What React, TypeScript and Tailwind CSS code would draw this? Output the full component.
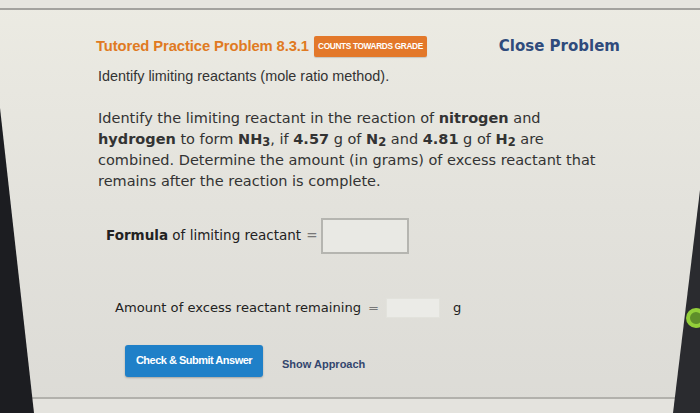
export default function App() {
  const verdana = 'font-["DejaVu_Sans",Verdana,sans-serif]';
  const arial = 'font-["Liberation_Sans",Arial,sans-serif]';
  const subCls = 'text-[11.5px] leading-none';

  return (
    <div className="relative w-[700px] h-[413px] overflow-hidden bg-gradient-to-b from-[#ecebe3] via-[#e3e2dc] to-[#dcdbd6] text-[#2b2b2b]">
      {/* top rule of the page */}
      <div className="h-[10px] bg-[#e6e5df] border-b-2 border-[#a3a29e]" />

      <div className="pl-[96px] pr-[80px]">
        {/* Header */}
        <div className="mt-[25px] flex items-center justify-between">
          <div className="flex items-center gap-[5px]">
            <h1 className={`${arial} text-[14.8px] font-bold text-[#e07a22] tracking-[-0.1px]`}>
              Tutored Practice Problem 8.3.1
            </h1>
            <span className={`${arial} h-[21px] px-[4px] flex items-center rounded-[2px] bg-[#e3782a] text-white text-[8.3px] font-bold tracking-[-0.35px] shadow-[0_1px_1px_rgba(0,0,0,0.15)]`}>
              COUNTS TOWARDS GRADE
            </span>
          </div>
          <button className={`${verdana} text-[15px] font-bold text-[#2f4b7c]`}>Close Problem</button>
        </div>

        <p className={`${arial} mt-[9px] ml-[2px] text-[14.4px] leading-[18px] text-[#333]`}>
          Identify limiting reactants (mole ratio method).
        </p>

        {/* Question */}
        <p className={`${verdana} mt-[23px] ml-[2px] w-[505px] text-[14.5px] leading-[21px] text-[#333]`}>
          Identify the limiting reactant in the reaction of <b>nitrogen</b> and <b>hydrogen</b> to form{' '}
          <b>
            NH<sub className={subCls}>3</sub>
          </b>
          , if <b>4.57</b> g of{' '}
          <b>
            N<sub className={subCls}>2</sub>
          </b>{' '}
          and <b>4.81</b> g of{' '}
          <b>
            H<sub className={subCls}>2</sub>
          </b>{' '}
          are combined. Determine the amount (in grams) of excess reactant that remains after the reaction is
          complete.
        </p>

        {/* Formula answer */}
        <div className={`${verdana} mt-[26px] ml-[10px] flex items-center text-[13.5px] text-[#222]`}>
          <span>
            <b>Formula</b> of limiting reactant
          </span>
          <span className="ml-[5px] text-[#777]">=</span>
          <input className="ml-[4px] w-[88px] h-[36px] border-2 border-[#b5b5b0] bg-[#e9e9e4] outline-none" />
        </div>

        {/* Amount answer */}
        <div className={`${verdana} mt-[44px] ml-[19px] flex items-center text-[13.1px] text-[#222]`}>
          <span>Amount of excess reactant remaining</span>
          <span className="ml-[7px] text-[#777]">=</span>
          <input className="ml-[7px] w-[54px] h-[20px] border border-[#e2e2dc] bg-[#ebebe7] outline-none" />
          <span className="ml-[13px]">g</span>
        </div>

        {/* Actions */}
        <div className="mt-[27px] ml-[29px] flex items-center">
          <button
            className={`${arial} w-[138px] h-[32px] rounded-[3px] bg-[#1f80c8] text-white text-[11px] font-bold tracking-[-0.5px] shadow-[0_1px_2px_rgba(0,0,0,0.25)]`}
          >
            Check &amp; Submit Answer
          </button>
          <button className={`${arial} ml-[19px] mt-[7px] text-[11px] font-bold text-[#33466e]`}>Show Approach</button>
        </div>
      </div>

      {/* bottom rule */}
      <div className="absolute left-0 right-0 top-[397px] h-[16px] bg-[#e4e3de] border-t-2 border-[#b2b1ac]" />

      {/* monitor bezel seen at the photo edges */}
      <div className="absolute left-0 top-0 w-[34px] h-[413px] bg-[#1c1d21] [clip-path:polygon(0_108px,100%_100%,0_100%)]" />
      <div className="absolute right-0 top-0 w-[27px] h-[413px] bg-[#2a2b2f] [clip-path:polygon(100%_190px,100%_100%,0_100%)]" />
      <div className="absolute left-[686px] top-[308px] w-[20px] h-[20px] rounded-full border-[4px] border-[#93cf3a] bg-[#5f8f2a]" />
    </div>
  );
}
